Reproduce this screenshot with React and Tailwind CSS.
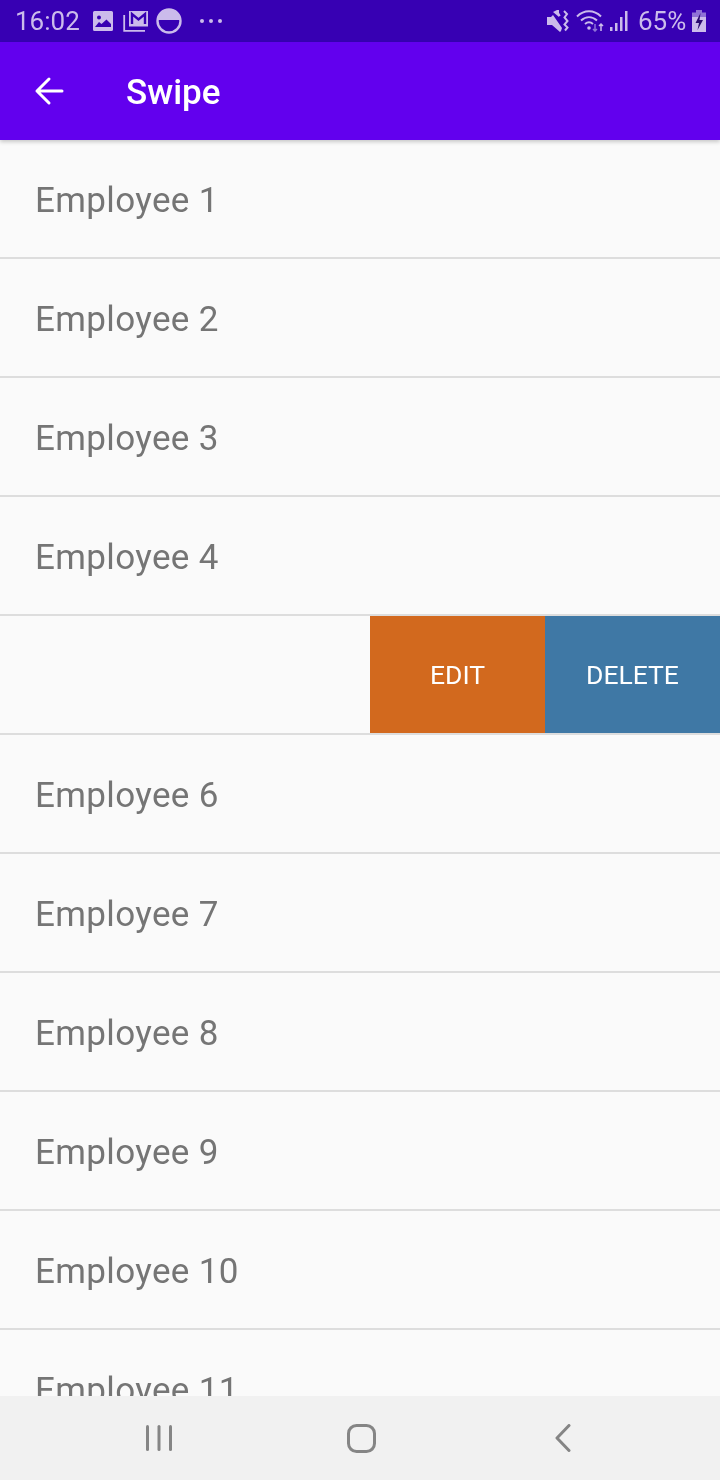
import React from 'react';

const topRows = ['Employee 1', 'Employee 2', 'Employee 3', 'Employee 4'];
const bottomRows = ['Employee 6', 'Employee 7', 'Employee 8', 'Employee 9', 'Employee 10', 'Employee 11'];

function Row({ name }) {
  return (
    <div className="h-[119px] shrink-0 flex items-center pl-[35px] pt-[4px] border-b-2 border-[#dddddd]">
      <span className="text-[35px] leading-none tracking-[0.35px] text-[#757575] will-change-transform">{name}</span>
    </div>
  );
}

function StatusIcons() {
  return (
    <div className="flex items-center">
      <svg className="ml-[12px]" width="22" height="20" viewBox="0 0 22 20" fill="currentColor">
        <path d="M1 1.500A1.500 1.500 0 0 1 2.500 0h17A1.500 1.500 0 0 1 21 1.500v17a1.500 1.500 0 0 1-1.500 1.500h-17A1.500 1.500 0 0 1 1 18.500zM3 16h16v-3l-4.500-4.500L9.500 13 7 11zM7 4.500a2 2 0 1 0 0 4 2 2 0 0 0 0-4z" fillRule="evenodd" />
      </svg>
      <svg className="ml-[9px]" width="26" height="22" viewBox="0 0 26 22" fill="none" stroke="currentColor">
        <path d="M1.200 5v15.800H22" strokeWidth="1.800" />
        <path d="M6 1h19v15.500H6z" fill="currentColor" stroke="none" />
        <path d="M9 14V4l6.500 5.500L22 4v10" stroke="#3700b3" strokeWidth="2.400" />
      </svg>
      <svg className="ml-[7px]" width="26" height="26" viewBox="0 0 26 26" fill="none">
        <circle cx="13" cy="13" r="11.500" stroke="currentColor" strokeWidth="2.400" />
        <path d="M2 12a11 11 0 0 1 22 0z" fill="currentColor" />
      </svg>
      <div className="ml-[18px] flex gap-[5px]">
        <span className="w-1 h-1 rounded-full bg-current" />
        <span className="w-1 h-1 rounded-full bg-current" />
        <span className="w-1 h-1 rounded-full bg-current" />
      </div>
    </div>
  );
}

function SystemIcons() {
  return (
    <div className="flex items-center">
      <svg width="23" height="22" viewBox="0 0 23 22" fill="currentColor">
        <path d="M1 7h4l2-2 9 13-1 3-1 1-8-7H1z" />
        <path d="M7 2l4-2h2v7z" />
        <path d="M11 1l3 5" stroke="currentColor" strokeWidth="1.500" />
        <path d="M18 1l3 3-2.500 3.500 3 3.500-3 3.500 3 3-2.500 3" fill="none" stroke="currentColor" strokeWidth="2" />
      </svg>
      <svg className="ml-[7px]" width="28" height="22" viewBox="0 0 28 22" fill="none" stroke="currentColor" strokeWidth="2">
        <path d="M1 6.500c7-7 17-7 24 0" />
        <path d="M5 10.500c5-4.500 11-4.500 16 0" />
        <path d="M9 14c3-2.500 5-2.500 8 0" />
        <circle cx="13" cy="18" r="1.800" fill="currentColor" stroke="none" />
        <path d="M19 14v7M17 19l2 2 2-2" stroke="#8f72d6" strokeWidth="1.500" />
        <path d="M25 21v-7M23 16l2-2 2 2" strokeWidth="1.500" />
      </svg>
      <svg className="ml-[6px]" width="18" height="20" viewBox="0 0 18 20" fill="currentColor">
        <rect x="0" y="16" width="2.500" height="4" />
        <rect x="5" y="12" width="2.500" height="8" />
        <rect x="10" y="6" width="2.500" height="14" />
        <rect x="15" y="0" width="2.500" height="20" />
      </svg>
      <span className="ml-[10px] text-[26px] leading-none will-change-transform">65%</span>
      <svg className="ml-[6px]" width="14" height="22" viewBox="0 0 14 22">
        <path d="M4 0h6v2.500h4V22H0V2.500h4z" fill="#8f72d6" />
        <path d="M0 7h14v15H0z" fill="currentColor" />
        <path d="M8.500 3L3.500 13H7l-1.500 7L11 10H7.500z" fill="#2a0a70" />
      </svg>
    </div>
  );
}

export default function App() {
  return (
    <div className="w-[720px] h-[1480px] flex flex-col overflow-hidden bg-[#fafafa]" style={{ fontFamily: 'Roboto, sans-serif' }}>
      <div className="h-[42px] shrink-0 flex items-center justify-between pl-[15px] pr-[14px] bg-[#3700b3] text-[#cbbbeb]">
        <div className="flex items-center">
          <span className="text-[26px] leading-none will-change-transform">16:02</span>
          <StatusIcons />
        </div>
        <SystemIcons />
      </div>

      <div className="relative z-10 h-[98px] shrink-0 flex items-center bg-[#6200ee] text-white shadow-[0_2px_4px_rgba(0,0,0,0.2)]">
        <svg className="ml-[34px]" width="30" height="30" viewBox="0 0 30 30" fill="none" stroke="currentColor" strokeWidth="3" strokeLinecap="round" strokeLinejoin="round">
          <path d="M28 15H3M15 3L3 15l12 12" />
        </svg>
        <span className="ml-[62px] pt-[2px] text-[35px] leading-none font-medium will-change-transform">Swipe</span>
      </div>

      <div className="flex-1 min-h-0 overflow-hidden flex flex-col">
        {topRows.map((name) => (
          <Row key={name} name={name} />
        ))}
        <div className="h-[119px] shrink-0 flex justify-end border-b-2 border-[#dddddd]">
          <div className="w-[175px] pt-[2px] flex items-center justify-center bg-[#d2691e] text-[26.500px] leading-none text-white">
            <span className="will-change-transform">EDIT</span>
          </div>
          <div className="w-[175px] pt-[2px] flex items-center justify-center bg-[#3f78a5] text-[26.500px] leading-none text-white">
            <span className="will-change-transform">DELETE</span>
          </div>
        </div>
        {bottomRows.map((name) => (
          <Row key={name} name={name} />
        ))}
      </div>

      <div className="h-[84px] shrink-0 flex items-center justify-center pl-[2px] bg-[#f1f1f1] text-[#858585]">
        <div className="w-[202px] flex justify-center">
          <svg width="28" height="28" viewBox="0 0 28 28" fill="currentColor">
            <rect x="1" y="1" width="3" height="26" rx="1.500" />
            <rect x="12.500" y="1" width="3" height="26" rx="1.500" />
            <rect x="24" y="1" width="3" height="26" rx="1.500" />
          </svg>
        </div>
        <div className="w-[202px] flex justify-center">
          <svg width="29" height="29" viewBox="0 0 29 29" fill="none" stroke="currentColor" strokeWidth="3">
            <rect x="1.500" y="1.500" width="26" height="26" rx="8" />
          </svg>
        </div>
        <div className="w-[202px] flex justify-center">
          <svg width="18" height="28" viewBox="0 0 18 28" fill="none" stroke="currentColor" strokeWidth="3" strokeLinecap="round" strokeLinejoin="round">
            <path d="M15 1.500L3 14l12 12.500" />
          </svg>
        </div>
      </div>
    </div>
  );
}
